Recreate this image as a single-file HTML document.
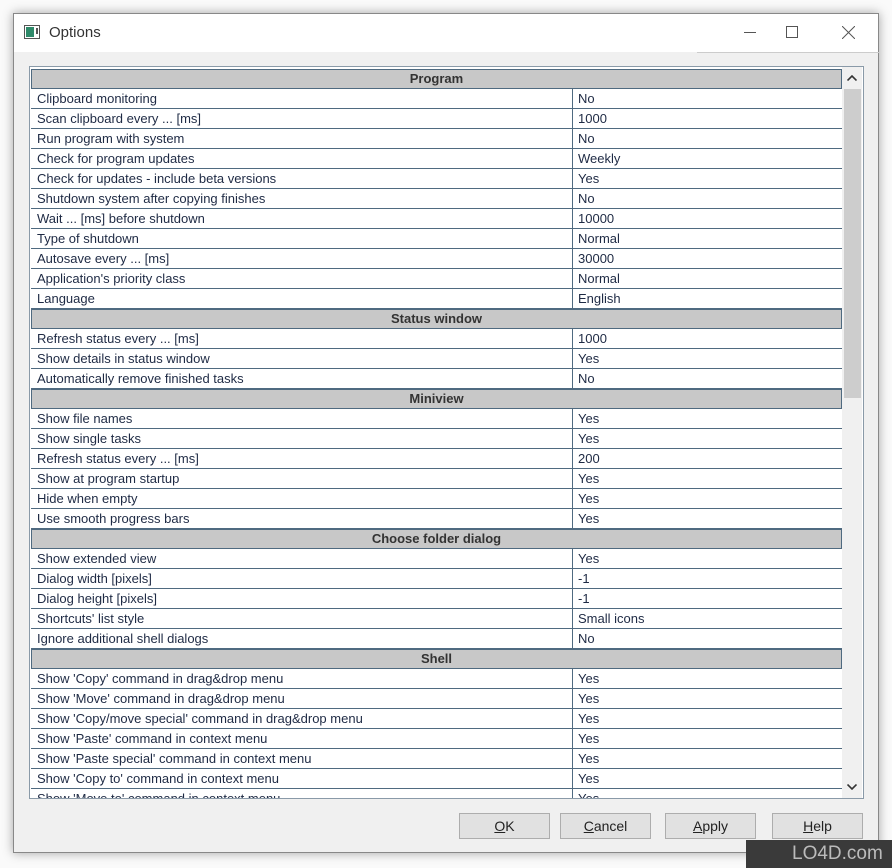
<!DOCTYPE html>
<html><head><meta charset="utf-8"><style>
*{margin:0;padding:0;box-sizing:border-box}
body{width:892px;height:868px;background:#fafafa;position:relative;overflow:hidden;font-family:"Liberation Sans",Arial,sans-serif;font-size:13px;color:#1e2a44}
#win{position:absolute;left:13px;top:13px;width:866px;height:840px;background:#f0f0f0;border:1px solid #888;box-shadow:0 0 10px rgba(0,0,0,.35)}
#title{position:absolute;left:0;top:0;width:100%;height:38px;background:#fff}
#title .t{position:absolute;left:35px;top:10px;font-size:15px;color:#333}
#grid{position:absolute;left:15px;top:52px;width:835px;height:733px;border:1px solid #8a9aa8;background:#fff;overflow:hidden}
.r{position:absolute;left:1px;width:811px;height:20px;border-bottom:1px solid #4f6a80;background:#fff}
.r span{position:absolute;top:2px;line-height:16px;white-space:nowrap}
.r .a{left:6px}.r .b{left:547px}
.r .d{position:absolute;left:541px;top:0;width:1px;height:20px;background:#4f6a80}
.h{background:#c8c8c8;border:1px solid #4f6a80;text-align:center;font-weight:bold;line-height:17px;color:#333}
#sb{position:absolute;left:812px;top:0;width:20px;height:731px;background:#f0f0f0}
#thumb{position:absolute;left:2px;top:22px;width:17px;height:309px;background:#cdcdcd}
.btn{position:absolute;top:799px;width:91px;height:26px;border:1px solid #adadad;background:#e1e1e1;text-align:center;line-height:24px;font-size:14px;color:#222}
#logo{position:absolute;left:746px;top:840px;width:146px;height:28px;background:#3a3a3a;color:#bbb;font-size:19px;line-height:28px;padding-left:46px;overflow:hidden;white-space:nowrap}
</style></head><body>
<div id="win">
<div id="title">
<svg style="position:absolute;left:10px;top:11px" width="16" height="14"><rect x="0.5" y="0.5" width="15" height="13" fill="#fff" stroke="#555"/><rect x="2" y="2" width="8" height="10" fill="#2f8a6a"/><rect x="12" y="3" width="2" height="6" fill="#555"/></svg>
<div class="t">Options</div>
<div style="position:absolute;left:730px;top:18px;width:12px;height:1px;background:#555"></div>
<div style="position:absolute;left:772px;top:12px;width:12px;height:12px;border:1px solid #555"></div>
<svg style="position:absolute;left:828px;top:12px" width="13" height="13"><path d="M0 0L13 13M13 0L0 13" stroke="#555" stroke-width="1"/></svg>
</div>
<div style="position:absolute;left:683px;top:38px;width:182px;height:1px;background:#ccc"></div>
<div id="grid">
<div class="r h" style="top:2px">Program</div>
<div class="r" style="top:22px"><span class="a">Clipboard monitoring</span><i class="d"></i><span class="b">No</span></div>
<div class="r" style="top:42px"><span class="a">Scan clipboard every ... [ms]</span><i class="d"></i><span class="b">1000</span></div>
<div class="r" style="top:62px"><span class="a">Run program with system</span><i class="d"></i><span class="b">No</span></div>
<div class="r" style="top:82px"><span class="a">Check for program updates</span><i class="d"></i><span class="b">Weekly</span></div>
<div class="r" style="top:102px"><span class="a">Check for updates - include beta versions</span><i class="d"></i><span class="b">Yes</span></div>
<div class="r" style="top:122px"><span class="a">Shutdown system after copying finishes</span><i class="d"></i><span class="b">No</span></div>
<div class="r" style="top:142px"><span class="a">Wait ... [ms] before shutdown</span><i class="d"></i><span class="b">10000</span></div>
<div class="r" style="top:162px"><span class="a">Type of shutdown</span><i class="d"></i><span class="b">Normal</span></div>
<div class="r" style="top:182px"><span class="a">Autosave every ... [ms]</span><i class="d"></i><span class="b">30000</span></div>
<div class="r" style="top:202px"><span class="a">Application's priority class</span><i class="d"></i><span class="b">Normal</span></div>
<div class="r" style="top:222px"><span class="a">Language</span><i class="d"></i><span class="b">English</span></div>
<div class="r h" style="top:242px">Status window</div>
<div class="r" style="top:262px"><span class="a">Refresh status every ... [ms]</span><i class="d"></i><span class="b">1000</span></div>
<div class="r" style="top:282px"><span class="a">Show details in status window</span><i class="d"></i><span class="b">Yes</span></div>
<div class="r" style="top:302px"><span class="a">Automatically remove finished tasks</span><i class="d"></i><span class="b">No</span></div>
<div class="r h" style="top:322px">Miniview</div>
<div class="r" style="top:342px"><span class="a">Show file names</span><i class="d"></i><span class="b">Yes</span></div>
<div class="r" style="top:362px"><span class="a">Show single tasks</span><i class="d"></i><span class="b">Yes</span></div>
<div class="r" style="top:382px"><span class="a">Refresh status every ... [ms]</span><i class="d"></i><span class="b">200</span></div>
<div class="r" style="top:402px"><span class="a">Show at program startup</span><i class="d"></i><span class="b">Yes</span></div>
<div class="r" style="top:422px"><span class="a">Hide when empty</span><i class="d"></i><span class="b">Yes</span></div>
<div class="r" style="top:442px"><span class="a">Use smooth progress bars</span><i class="d"></i><span class="b">Yes</span></div>
<div class="r h" style="top:462px">Choose folder dialog</div>
<div class="r" style="top:482px"><span class="a">Show extended view</span><i class="d"></i><span class="b">Yes</span></div>
<div class="r" style="top:502px"><span class="a">Dialog width [pixels]</span><i class="d"></i><span class="b">-1</span></div>
<div class="r" style="top:522px"><span class="a">Dialog height [pixels]</span><i class="d"></i><span class="b">-1</span></div>
<div class="r" style="top:542px"><span class="a">Shortcuts' list style</span><i class="d"></i><span class="b">Small icons</span></div>
<div class="r" style="top:562px"><span class="a">Ignore additional shell dialogs</span><i class="d"></i><span class="b">No</span></div>
<div class="r h" style="top:582px">Shell</div>
<div class="r" style="top:602px"><span class="a">Show 'Copy' command in drag&amp;drop menu</span><i class="d"></i><span class="b">Yes</span></div>
<div class="r" style="top:622px"><span class="a">Show 'Move' command in drag&amp;drop menu</span><i class="d"></i><span class="b">Yes</span></div>
<div class="r" style="top:642px"><span class="a">Show 'Copy/move special' command in drag&amp;drop menu</span><i class="d"></i><span class="b">Yes</span></div>
<div class="r" style="top:662px"><span class="a">Show 'Paste' command in context menu</span><i class="d"></i><span class="b">Yes</span></div>
<div class="r" style="top:682px"><span class="a">Show 'Paste special' command in context menu</span><i class="d"></i><span class="b">Yes</span></div>
<div class="r" style="top:702px"><span class="a">Show 'Copy to' command in context menu</span><i class="d"></i><span class="b">Yes</span></div>
<div class="r" style="top:722px"><span class="a">Show 'Move to' command in context menu</span><i class="d"></i><span class="b">Yes</span></div>
<div id="sb"><svg style="position:absolute;left:5px;top:8px" width="10" height="6"><path d="M0.5 5.5L5 1L9.5 5.5" stroke="#333" stroke-width="1.6" fill="none"/></svg><div id="thumb"></div><svg style="position:absolute;left:5px;top:717px" width="10" height="6"><path d="M0.5 0.5L5 5L9.5 0.5" stroke="#333" stroke-width="1.6" fill="none"/></svg></div>
</div>
<div class="btn" style="left:445px"><u>O</u>K</div>
<div class="btn" style="left:546px"><u>C</u>ancel</div>
<div class="btn" style="left:651px"><u>A</u>pply</div>
<div class="btn" style="left:758px"><u>H</u>elp</div>
</div>
<div id="logo">LO4D.com</div>
</body></html>
